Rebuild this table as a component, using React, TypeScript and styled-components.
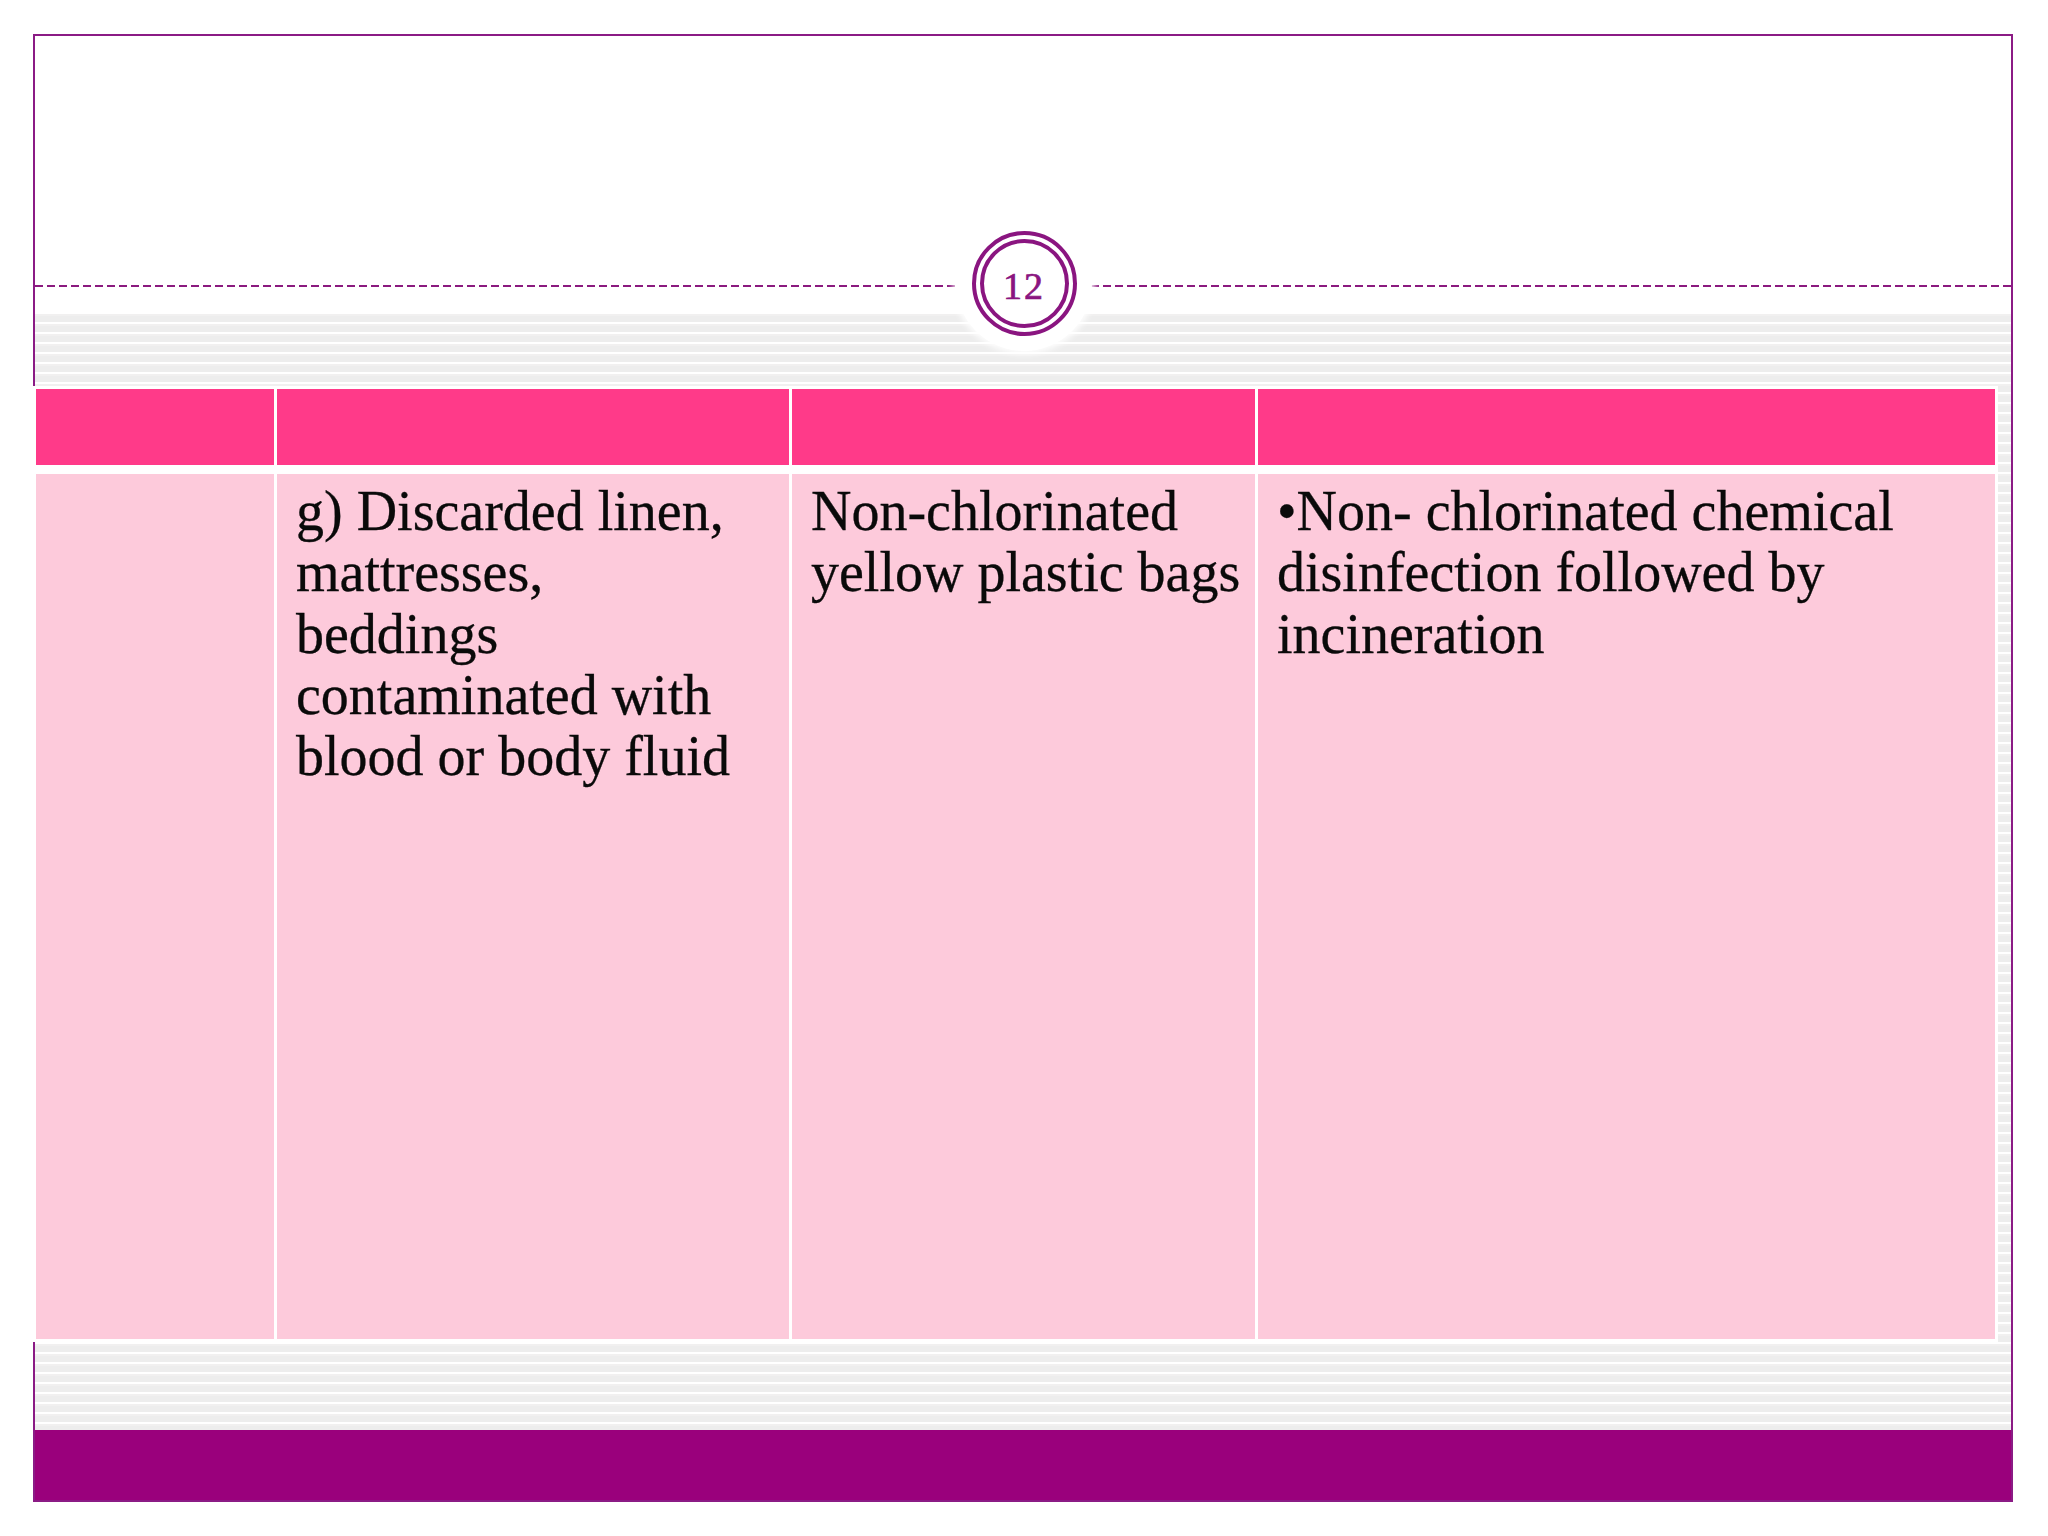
import React from "react";
import styled, { createGlobalStyle } from "styled-components";

const GlobalStyle = createGlobalStyle`
  html, body {
    margin: 0;
    padding: 0;
    background: #ffffff;
  }
  body {
    font-family: "Liberation Serif", "Times New Roman", serif;
    width: 2048px;
    height: 1536px;
    overflow: hidden;
  }
`;

const Page = styled.div`
  width: 2048px;
  height: 1536px;
  padding: 34px 0 0 33px;
  box-sizing: border-box;
  background: #ffffff;
`;

const Frame = styled.div`
  position: relative;
  width: 1980px;
  height: 1468px;
  box-sizing: border-box;
  border: 2px solid #8b1b85;
  display: flex;
  flex-direction: column;
  background: #ffffff;
`;

const TitleArea = styled.div`
  height: 249px;
  flex: none;
`;

const DashedRule = styled.div`
  height: 2px;
  flex: none;
  background: repeating-linear-gradient(
    to right,
    #8b1a7f 0 8px,
    transparent 8px 12px
  );
`;

const Spacer = styled.div<{ $h: number }>`
  height: ${(p) => p.$h}px;
  flex: none;
`;

const Striped = styled.div`
  height: 1118px;
  flex: none;
  box-sizing: border-box;
  padding: 74px 0 88px 0;
  background: repeating-linear-gradient(
    to bottom,
    #ffffff 0 2px,
    #f1f0f0 2px 4px,
    #ededed 4px 10px
  );
`;

const Table = styled.div`
  margin-left: -2px;
  width: 1965px;
  height: 956px;
  box-sizing: border-box;
  padding: 3px;
  background: #ffffff;
  display: grid;
  grid-template-columns: 238px 512px 463px 737px;
  grid-template-rows: 76px 865px;
  column-gap: 3px;
  row-gap: 9px;
`;

const HeadCell = styled.div`
  background: #ff3a89;
`;

const BodyCell = styled.div`
  background: #fdcadb;
  box-sizing: border-box;
  padding: 7px 10px 0 19px;
  color: #0a0a0a;
  font-family: "Liberation Serif", "Times New Roman", serif;
  font-size: 56px;
  line-height: 61.3px;
  -webkit-text-stroke: 0.3px #0a0a0a;
`;

const Line = styled.div`
  white-space: nowrap;
`;

const Bar = styled.div`
  height: 70px;
  flex: none;
  background: #9a007c;
`;

const Badge = styled.div`
  position: absolute;
  left: 921px;
  top: 179px;
  width: 136px;
  height: 136px;
  border-radius: 50%;
  background: #ffffff;
  box-shadow: 0 0 6px 3px rgba(255, 255, 255, 0.9);
  display: flex;
  align-items: center;
  justify-content: center;
`;

const OuterRing = styled.div`
  width: 105px;
  height: 105px;
  box-sizing: border-box;
  border-radius: 50%;
  border: 4px solid #8a1580;
  display: flex;
  align-items: center;
  justify-content: center;
`;

const InnerRing = styled.div`
  width: 89px;
  height: 89px;
  box-sizing: border-box;
  border-radius: 50%;
  border: 4px solid #8a1580;
  display: flex;
  align-items: center;
  justify-content: center;
  color: #8a1580;
  font-family: "Liberation Serif", "Times New Roman", serif;
  font-size: 38px;
  letter-spacing: 2px;
  padding-top: 6px;
  -webkit-text-stroke: 0.7px #8a1580;
`;

const rows: string[][] = [
  [],
  ["g) Discarded linen,", "mattresses,", "beddings", "contaminated with", "blood or body fluid"],
  ["Non-chlorinated", "yellow plastic bags"],
  ["•Non- chlorinated chemical", "disinfection followed by", "incineration"],
];

export default function App() {
  return (
    <>
      <GlobalStyle />
      <Page>
        <Frame>
          <TitleArea />
          <DashedRule />
          <Spacer $h={25} />
          <Striped>
            <Table>
              {rows.map((_, i) => (
                <HeadCell key={`h${i}`} />
              ))}
              {rows.map((lines, i) => (
                <BodyCell key={`b${i}`}>
                  {lines.map((l, j) => (
                    <Line key={j}>{l}</Line>
                  ))}
                </BodyCell>
              ))}
            </Table>
          </Striped>
          <Bar />
          <Badge>
            <OuterRing>
              <InnerRing>12</InnerRing>
            </OuterRing>
          </Badge>
        </Frame>
      </Page>
    </>
  );
}
